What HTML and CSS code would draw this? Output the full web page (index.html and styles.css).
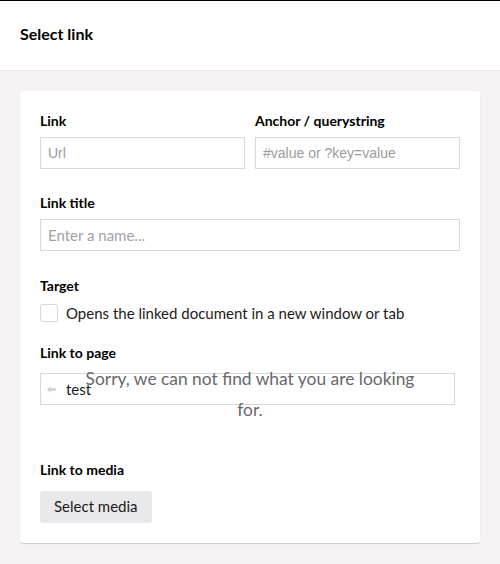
FILE: index.html
```html
<!DOCTYPE html>
<html>
<head>
<meta charset="utf-8">
<link rel="stylesheet" href="styles.css">
</head>
<body>
<div class="header"><h1 class="title">Select link</h1></div>
<div class="main">
  <div class="card">
    <div class="row">
      <div class="col">
        <div class="label">Link</div>
        <div class="input ph-sans">Url</div>
      </div>
      <div class="col">
        <div class="label">Anchor / querystring</div>
        <div class="input ph-sans">#value or ?key=value</div>
      </div>
    </div>
    <div class="field">
      <div class="label">Link title</div>
      <div class="input ph-lato">Enter a name...</div>
    </div>
    <div class="field target">
      <div class="label">Target</div>
      <div class="check-row"><span class="checkbox"></span><span class="check-text">Opens the linked document in a new window or tab</span></div>
    </div>
    <div class="field page">
      <div class="label label-page">Link to page</div>
      <div class="picker-wrap">
        <div class="picker">
          <svg class="arrow" width="9" height="7" viewBox="0 0 9 7"><path d="M0 3.5 L3.6 0 L3.6 2.2 L9 2.2 L9 4.8 L3.6 4.8 L3.6 7 Z" fill="#d2d2d4"/></svg>
          <span class="picker-name">test</span>
        </div>
        <div class="empty">Sorry, we can not find what you are looking for.</div>
      </div>
    </div>
    <div class="field media">
      <div class="label label-media">Link to media</div>
      <button class="btn">Select media</button>
    </div>
  </div>
</div>
</body>
</html>
```

FILE: styles.css
```css
html, body {
  margin: 0;
  padding: 0;
}
body {
  background: #f4f2f2;
  font-family: Lato, "Open Sans", sans-serif;
  color: #000;
  width: 500px;
  height: 564px;
  overflow: hidden;
}
.header {
  box-sizing: border-box;
  background: #fff;
  border-top: 1px solid #000;
  border-bottom: 1px solid #e9e9eb;
  height: 71px;
  display: flex;
  align-items: center;
  padding: 0 20px 3px;
}
.title {
  margin: 0;
  font-size: 16px;
  font-weight: 700;
  line-height: 20px;
  color: #000;
}
.main {
  padding: 20px 20px 0;
}
.card {
  background: #fff;
  border-radius: 3px;
  box-shadow: 0 1px 1px rgba(0,0,0,0.16);
  padding: 20px 20px 20px;
}
.row {
  display: flex;
  gap: 10px;
}
.col {
  flex: 1;
}
.label {
  font-size: 14px;
  font-weight: 700;
  line-height: 20px;
  margin-bottom: 6px;
}
.input {
  box-sizing: border-box;
  height: 32px;
  border: 1px solid #d8d7d9;
  padding: 0 7px 1px;
  display: flex;
  align-items: center;
  color: #9b9b9b;
}
.ph-sans {
  font-family: "Liberation Sans", Arial, sans-serif;
  font-size: 14px;
}
.ph-lato {
  font-size: 15px;
  color: #a2a1a6;
}
.field {
  margin-top: 24px;
}
.target {
  margin-top: 25px;
}
.check-row {
  display: flex;
  align-items: center;
  gap: 8px;
  height: 20px;
  margin-top: 7px;
}
.checkbox {
  box-sizing: border-box;
  width: 18px;
  height: 18px;
  border: 1px solid #d8d7d9;
  border-radius: 2px;
  background: #fff;
}
.check-text {
  font-size: 15px;
  color: #1b1b1b;
}
.page {
  margin-top: 20px;
}
.label-page {
  margin-bottom: 10px;
}
.picker-wrap {
  position: relative;
  width: 415px;
}
.picker {
  box-sizing: border-box;
  height: 32px;
  border: 1px solid #d8d7d9;
  display: flex;
  align-items: center;
  padding-left: 6px;
}
.arrow {
  margin-right: 10px;
}
.picker-name {
  font-size: 15px;
  color: #1b1b1b;
}
.empty {
  position: absolute;
  top: -10px;
  left: 37px;
  width: 346px;
  text-align: center;
  font-size: 17.4px;
  line-height: 31px;
  color: #68676b;
}
.media {
  margin-top: 55px;
}
.label-media {
  margin-bottom: 11px;
}
.btn {
  font-family: Lato, "Open Sans", sans-serif;
  font-size: 15px;
  color: #1b1b1b;
  background: #e9e9eb;
  border: none;
  border-radius: 3px;
  height: 32px;
  padding: 0 14px 2px;
  display: block;
}
```
